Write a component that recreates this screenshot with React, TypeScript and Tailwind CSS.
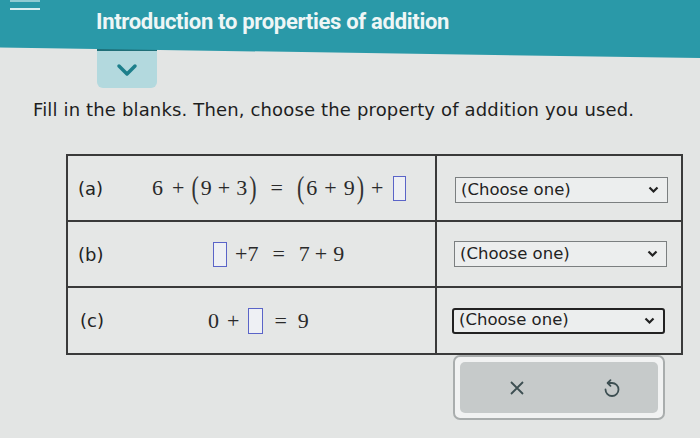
import React from "react";

const Blank = ({ cls }: { cls?: string }) => (
  <span className={"inline-block shrink-0 border-[1.5px] border-[#5a64c8] bg-[#eef0f4] " + (cls || "w-[13px] h-[25px]")} />
);

const P = ({ c, cls }: { c: string; cls?: string }) => (
  <span className={"inline-block text-[22px] leading-none scale-y-[1.4] font-light text-[#333] " + (cls || "")}>{c}</span>
);

const T = ({ c, cls }: { c: string; cls?: string }) => <span className={"leading-none " + (cls || "")}>{c}</span>;

const Select = ({ focused }: { focused?: boolean }) => (
  <div
    className={
      "w-[213px] h-[26px] flex items-center justify-between pl-[5px] pr-[8px] bg-[#eceeee] text-[#222] text-[16.5px] " +
      (focused ? "border-2 border-[#222] rounded-[3px]" : "border border-[#7b7f80]")
    }
    style={{ fontFamily: "'DejaVu Sans', sans-serif" }}
  >
    <span>(Choose one)</span>
    <svg width="11" height="8" viewBox="0 0 11 8">
      <path d="M1.5 1.5 L5.5 5.5 L9.5 1.5" stroke="#222" strokeWidth="2.2" fill="none" />
    </svg>
  </div>
);

export default function App() {
  const serif = { fontFamily: "'Liberation Serif', serif" };
  const sans = { fontFamily: "'DejaVu Sans', sans-serif" };
  return (
    <div className="w-[700px] h-[438px] overflow-hidden bg-[#e3e5e4] flex flex-col relative">
      {/* header */}
      <div className="h-[58px] bg-[#2a99a8] flex items-start relative [clip-path:polygon(0_0,100%_0,100%_100%,0_82%)]">
        <div className="absolute left-[10px] top-[0px] w-[30px] h-[2px] bg-[#8fcbd2]" />
        <div className="absolute left-[10px] top-[8px] w-[30px] h-[2px] bg-[#d8eef0]" />
        <div
          className="ml-[96px] mt-[5px] text-[22px] font-bold text-[#eef6f6] tracking-[-0.3px]"
          style={{ fontFamily: "Roboto, sans-serif" }}
        >
          Introduction to properties of addition
        </div>
      </div>
      {/* tab */}
      <div className="-mt-[10px] ml-[97px] w-[60px] h-[40px] bg-[#b3d9de] border-t-[3px] border-[#1f6f78] rounded-b-[6px] flex items-center justify-center">
        <svg width="22" height="14" viewBox="0 0 22 14">
          <path d="M3 3 L11 11 L19 3" stroke="#1d7f8b" strokeWidth="3.5" fill="none" strokeLinecap="round" strokeLinejoin="round" />
        </svg>
      </div>
      {/* instruction */}
      <div className="ml-[33px] mt-[8px] text-[18px] text-[#1e1e1e] tracking-[0.15px]" style={sans}>
        Fill in the blanks. Then, choose the property of addition you used.
      </div>
      {/* table */}
      <div className="ml-[66px] mt-[31px] w-[617px] border-2 border-[#3a3a3a] grid grid-cols-[369px_1fr] bg-[#e5e7e6]">
        <div className="h-[66px] border-r-2 border-b-2 border-[#3a3a3a] flex items-center">
          <span className="ml-[10px] w-[74px] shrink-0 text-[18px] text-[#222]" style={sans}>(a)</span>
          <span className="text-[22px] text-[#2a2a2a] flex items-center" style={serif}>
            <T c="6" />
            <T c="+" cls="ml-[9px]" />
            <P c="(" cls="ml-[7px]" />
            <T c="9" cls="ml-[2px]" />
            <T c="+" cls="ml-[6px]" />
            <T c="3" cls="ml-[6px]" />
            <P c=")" cls="ml-[2px]" />
            <T c="=" cls="ml-[14px]" />
            <P c="(" cls="ml-[14px]" />
            <T c="6" cls="ml-[2px]" />
            <T c="+" cls="ml-[7px]" />
            <T c="9" cls="ml-[7px]" />
            <P c=")" cls="ml-[2px]" />
            <T c="+" cls="ml-[7px]" />
            <span className="ml-[10px] flex"><Blank /></span>
          </span>
        </div>
        <div className="h-[66px] border-b-2 border-[#3a3a3a] flex items-center pl-[18px] pt-[4px]">
          <Select />
        </div>
        <div className="h-[66px] border-r-2 border-b-2 border-[#3a3a3a] flex items-center">
          <span className="ml-[10px] w-[135px] shrink-0 text-[18px] text-[#222]" style={sans}>(b)</span>
          <span className="text-[22px] text-[#2a2a2a] flex items-center" style={serif}>
            <Blank cls="w-[14px] h-[25px]" />
            <T c="+7" cls="ml-[8px]" />
            <T c="=" cls="ml-[14px]" />
            <T c="7" cls="ml-[14px]" />
            <T c="+" cls="ml-[5px]" />
            <T c="9" cls="ml-[6px]" />
          </span>
        </div>
        <div className="h-[66px] border-b-2 border-[#3a3a3a] flex items-center pl-[17px]">
          <Select />
        </div>
        <div className="h-[65px] border-r-2 border-[#3a3a3a] flex items-center">
          <span className="ml-[12px] w-[128px] shrink-0 text-[18px] text-[#222]" style={sans}>(c)</span>
          <span className="text-[22px] text-[#2a2a2a] flex items-center" style={serif}>
            <T c="0" />
            <T c="+" cls="ml-[8px]" />
            <span className="ml-[9px] flex"><Blank cls="w-[15px] h-[26px]" /></span>
            <T c="=" cls="ml-[11px]" />
            <T c="9" cls="ml-[11px]" />
          </span>
        </div>
        <div className="h-[65px] flex items-center pl-[15px]">
          <Select focused />
        </div>
      </div>
      {/* buttons */}
      <div className="ml-[453px] w-[212px] h-[65px] rounded-[7px] border-2 border-[#a9adad] bg-[#f1f2f2] p-[5px]">
        <div className="w-full h-full rounded-[5px] bg-[#c6caca] flex items-center justify-around pl-[10px]">
          <svg width="16" height="16" viewBox="0 0 16 16">
            <path d="M2 2 L14 14 M14 2 L2 14" stroke="#3d4f52" strokeWidth="1.8" fill="none" />
          </svg>
          <svg width="18" height="20" viewBox="0 0 18 20">
            <path d="M6 5 H10 A6.5 6.5 0 1 1 3.5 11.5" stroke="#3d4f52" strokeWidth="1.8" fill="none" strokeLinecap="round" />
            <path d="M8.5 2.2 L5.6 5 L8.5 7.8" stroke="#3d4f52" strokeWidth="1.8" fill="none" strokeLinecap="round" strokeLinejoin="round" />
          </svg>
        </div>
      </div>
    </div>
  );
}
